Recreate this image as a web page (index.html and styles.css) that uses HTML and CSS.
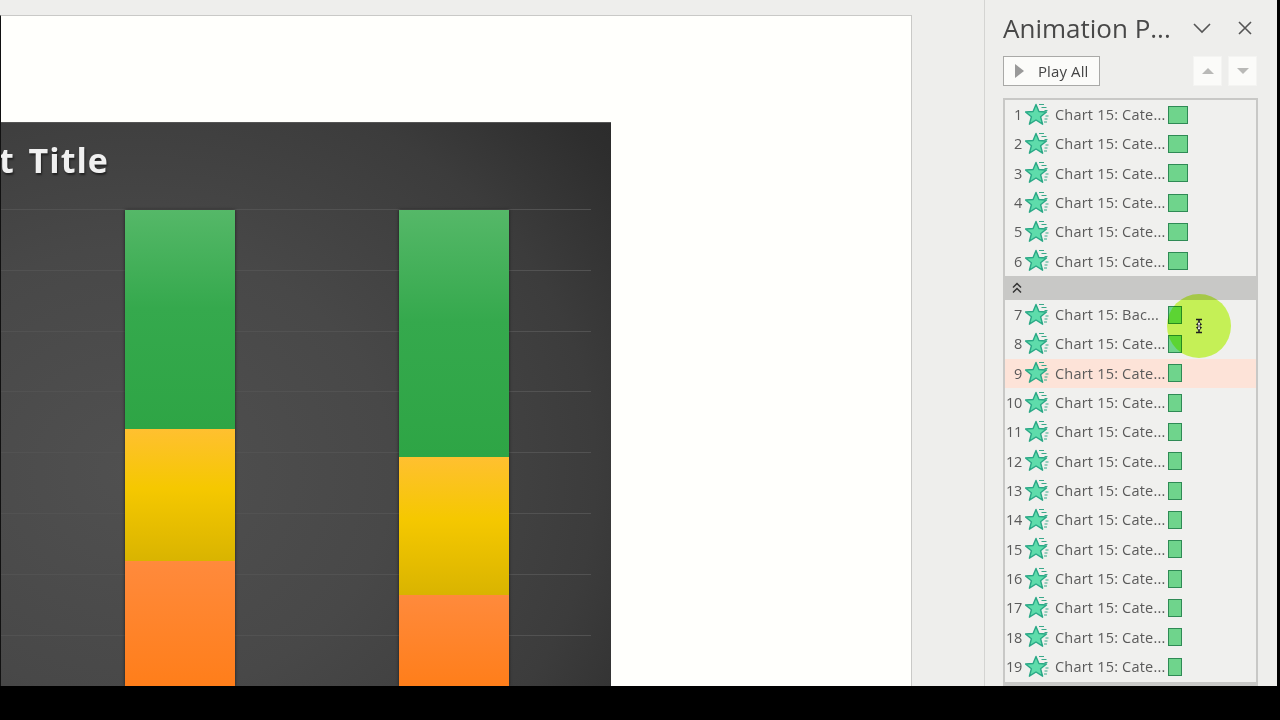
FILE: index.html
```html
<!DOCTYPE html>
<html lang="en">
<head>
<meta charset="utf-8">
<title>Animation Pane</title>
<link rel="stylesheet" href="styles.css">
</head>
<body>
<svg class="defs" width="0" height="0" aria-hidden="true">
  <symbol id="star" viewBox="0 0 24 24">
    <path d="M11 1.500l2.900 7 7.600.5-5.900 4.800 2 7.400L11 17l-6.600 4.200 2-7.400L.5 9l7.600-.5z" fill="#5edcab" stroke="#2aa886" stroke-width="1.400" stroke-linejoin="round"/>
    <path d="M14 1.500h5M16.500 4.500h5M19.500 7.500h3M20.500 13h3M19.500 16h3M19 19h3" fill="none" stroke="#3aa98a" stroke-width="1.200"/>
  </symbol>
</svg>
<main class="app">
  <section class="editor">
    <div class="slide">
      <div class="chart">
        <h1 class="chart-title">Chart Title</h1>
        <div class="plot">
          <div class="bar">
            <div class="seg green s1g"></div>
            <div class="seg yellow s1y"></div>
            <div class="seg orange s1o"></div>
          </div>
          <div class="bar">
            <div class="seg green s2g"></div>
            <div class="seg yellow s2y"></div>
            <div class="seg orange s2o"></div>
          </div>
        </div>
      </div>
    </div>
  </section>
  <aside class="pane">
    <header class="pane-head">
      <h2 class="pane-title">Animation P...</h2>
      <svg class="chev" width="20" height="12" viewBox="0 0 20 12"><path d="M2 2l8 8 8-8" fill="none" stroke="#555" stroke-width="1.600"/></svg>
      <svg class="close" width="16" height="16" viewBox="0 0 16 16"><path d="M2 2l12 12M14 2L2 14" fill="none" stroke="#555" stroke-width="1.600"/></svg>
    </header>
    <div class="tools">
      <button class="play"><span class="play-tri"></span>Play All</button>
      <div class="spacer"></div>
      <button class="move"><span class="tri-up"></span></button>
      <button class="move"><span class="tri-down"></span></button>
    </div>
    <div class="list">
      <div class="row"><span class="num">1</span><svg class="star"><use href="#star"/></svg><span class="label">Chart 15: Cate...</span><span class="tl wide"></span></div>
      <div class="row"><span class="num">2</span><svg class="star"><use href="#star"/></svg><span class="label">Chart 15: Cate...</span><span class="tl wide"></span></div>
      <div class="row"><span class="num">3</span><svg class="star"><use href="#star"/></svg><span class="label">Chart 15: Cate...</span><span class="tl wide"></span></div>
      <div class="row"><span class="num">4</span><svg class="star"><use href="#star"/></svg><span class="label">Chart 15: Cate...</span><span class="tl wide"></span></div>
      <div class="row"><span class="num">5</span><svg class="star"><use href="#star"/></svg><span class="label">Chart 15: Cate...</span><span class="tl wide"></span></div>
      <div class="row"><span class="num">6</span><svg class="star"><use href="#star"/></svg><span class="label">Chart 15: Cate...</span><span class="tl wide"></span></div>
      <div class="collapse"><svg width="10" height="12" viewBox="0 0 10 12"><path d="M1 5.500l4-4 4 4M1 10.500l4-4 4 4" fill="none" stroke="#333" stroke-width="1.500"/></svg></div>
      <div class="row"><span class="num">7</span><svg class="star"><use href="#star"/></svg><span class="label">Chart 15: Bac...</span><span class="tl"></span></div>
      <div class="row"><span class="num">8</span><svg class="star"><use href="#star"/></svg><span class="label">Chart 15: Cate...</span><span class="tl"></span></div>
      <div class="row active"><span class="num">9</span><svg class="star"><use href="#star"/></svg><span class="label">Chart 15: Cate...</span><span class="tl"></span></div>
      <div class="row"><span class="num">10</span><svg class="star"><use href="#star"/></svg><span class="label">Chart 15: Cate...</span><span class="tl"></span></div>
      <div class="row"><span class="num">11</span><svg class="star"><use href="#star"/></svg><span class="label">Chart 15: Cate...</span><span class="tl"></span></div>
      <div class="row"><span class="num">12</span><svg class="star"><use href="#star"/></svg><span class="label">Chart 15: Cate...</span><span class="tl"></span></div>
      <div class="row"><span class="num">13</span><svg class="star"><use href="#star"/></svg><span class="label">Chart 15: Cate...</span><span class="tl"></span></div>
      <div class="row"><span class="num">14</span><svg class="star"><use href="#star"/></svg><span class="label">Chart 15: Cate...</span><span class="tl"></span></div>
      <div class="row"><span class="num">15</span><svg class="star"><use href="#star"/></svg><span class="label">Chart 15: Cate...</span><span class="tl"></span></div>
      <div class="row"><span class="num">16</span><svg class="star"><use href="#star"/></svg><span class="label">Chart 15: Cate...</span><span class="tl"></span></div>
      <div class="row"><span class="num">17</span><svg class="star"><use href="#star"/></svg><span class="label">Chart 15: Cate...</span><span class="tl"></span></div>
      <div class="row"><span class="num">18</span><svg class="star"><use href="#star"/></svg><span class="label">Chart 15: Cate...</span><span class="tl"></span></div>
      <div class="row"><span class="num">19</span><svg class="star"><use href="#star"/></svg><span class="label">Chart 15: Cate...</span><span class="tl"></span></div>
    </div>
  </aside>
</main>
<footer class="letterbox"></footer>
<div class="spotlight">
  <svg width="10" height="16" viewBox="0 0 10 16"><path d="M2 1.500h6M2 14.500h6M5 1.500v13" fill="none" stroke="#222" stroke-width="1.500"/><path d="M5 3.500L7.500 6.500h-1.500v3h1.500L5 12.500 2.500 9.500h1.500v-3h-1.500z" fill="#fff" stroke="#222" stroke-width="1"/></svg>
</div>
</body>
</html>
```
FILE: styles.css
```css
* { box-sizing: border-box; }
html, body { margin: 0; padding: 0; width: 1280px; height: 720px; overflow: hidden; background: #000; }
body { font-family: "Open Sans", "Liberation Sans", sans-serif; }
.defs { display: block; height: 0; }

.app { display: flex; width: 1277px; height: 686px; background: #eeeeec; }
.editor { width: 985px; padding-top: 15px; border-right: 1px solid #d4d4d2; flex: none; height: 686px; }
.slide { width: 912px; height: 671px; background: #fffffc; border-top: 1px solid #c9c9c7; border-right: 1px solid #c9c9c7; border-left: 1px solid #111; overflow: hidden; }

.chart { width: 610px; height: 564px; margin-top: 106px; overflow: hidden; background: radial-gradient(ellipse 640px 560px at 22% 62%, #505050 0%, #484848 40%, #3c3c3c 72%, #2e2e2e 92%, #262626 110%); border-top: 1px solid #555; }
.chart-title { margin: 0 0 0 -86px; height: 86px; padding-top: 15px; font-size: 34px; line-height: 44px; font-weight: 700; letter-spacing: 1px; word-spacing: 4px; color: #f0f0f0; white-space: nowrap; text-shadow: 1px 2px 2px rgba(0,0,0,.5); }
.plot { width: 590px; height: 477px; padding: 1px 0 0 124px; display: flex; gap: 164px; background: repeating-linear-gradient(to bottom, #525252 0, #525252 1px, transparent 1px, transparent 60.800px); }
.bar { width: 110px; height: 476px; display: flex; flex-direction: column; box-shadow: 0 0 3px rgba(0,0,0,.6); flex: none; }
.seg { flex: none; }
.green { background: linear-gradient(to bottom, #55b868 0, #35a94d 45%, #2ea545 100%); }
.yellow { background: linear-gradient(to bottom, #ffc030 0, #f5c800 45%, #d9b400 100%); }
.orange { background: linear-gradient(to bottom, #ff8a3c 0, #ff7e1a 100%); }
.s1g { height: 219px; } .s1y { height: 132px; } .s1o { height: 125px; }
.s2g { height: 247px; } .s2y { height: 138px; } .s2o { height: 91px; }

.pane { flex: 1; min-width: 0; padding-left: 18px; display: flex; flex-direction: column; }
.pane-head { height: 56px; display: flex; align-items: center; }
.pane-title { margin: 0; font-size: 26px; font-weight: 400; color: #484848; width: 189px; white-space: nowrap; line-height: 30px; }
.chev { margin-left: 0; }
.close { margin-left: 25px; }

.tools { height: 30px; width: 254px; display: flex; gap: 6px; flex: none; }
.play { width: 97px; height: 30px; padding: 0 0 0 34px; text-align: left; border: 1px solid #a9a9a7; background: #fbfbf9; font: 15px "Open Sans", sans-serif; letter-spacing: .1px; color: #444; position: relative; display: flex; align-items: center; }
.play-tri { position: absolute; left: 11px; top: 7px; width: 0; height: 0; border-left: 9px solid #999; border-top: 7px solid transparent; border-bottom: 7px solid transparent; }
.spacer { flex: 1; }
.move { width: 29px; height: 30px; padding: 0; border: 1px solid #f4f4f2; background: #fbfbf9; display: flex; align-items: center; justify-content: center; }
.tri-up { width: 0; height: 0; border-left: 6px solid transparent; border-right: 6px solid transparent; border-bottom: 6px solid #b9b9b7; }
.tri-down { width: 0; height: 0; border-left: 6px solid transparent; border-right: 6px solid transparent; border-top: 6px solid #b9b9b7; }

.list { margin-top: 12px; width: 255px; height: 588px; border: 2px solid #c8c8c6; border-bottom-width: 4px; overflow: hidden; background: #f0f0ee; flex: none; }
.row { height: 29.330px; display: flex; align-items: center; color: #5a5a5a; font-size: 14.500px; }
.row.active { background: #fde3d8; }
.num { width: 17px; text-align: right; flex: none; font-size: 14.500px; letter-spacing: -.3px; }
.star { width: 24px; height: 24px; margin-left: 3px; flex: none; }
.label { margin-left: 6px; width: 113px; white-space: nowrap; flex: none; letter-spacing: .2px; }
.tl { width: 14px; height: 18px; background: #6fd48c; border: 1px solid #2f8a55; flex: none; }
.tl.wide { width: 20px; }
.collapse { height: 24px; background: #c8c8c6; padding-left: 7px; display: flex; align-items: center; }

.letterbox { height: 34px; background: #000; }

.spotlight { position: absolute; left: 1167px; top: 294px; width: 64px; height: 64px; border-radius: 50%; background: rgb(210, 255, 92); mix-blend-mode: multiply; display: flex; align-items: center; justify-content: center; }
```
